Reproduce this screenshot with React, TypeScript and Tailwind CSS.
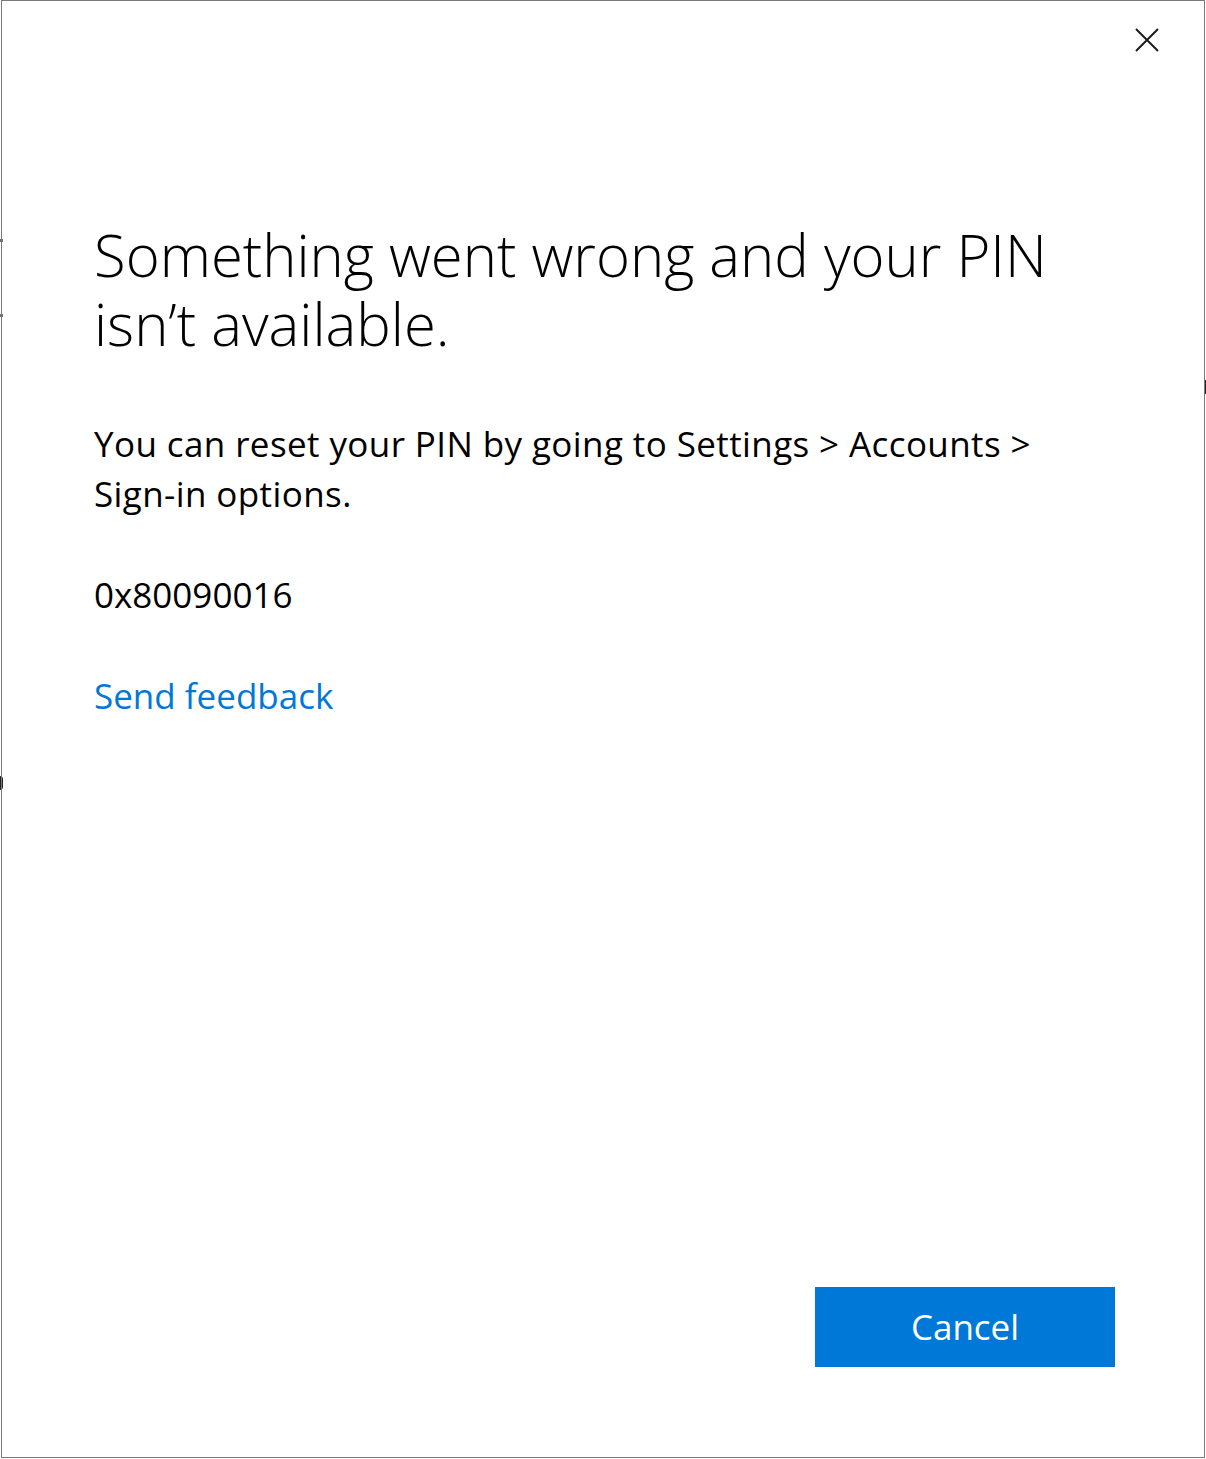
import React from "react";

const font = { fontFamily: '"Open Sans", "Noto Sans", sans-serif' };

const CloseIcon = () => (
  <svg width="24" height="24" viewBox="0 0 24 24" fill="none">
    <path d="M1 1L23 23M23 1L1 23" stroke="#1b1b1b" strokeWidth="2" />
  </svg>
);

export default function App() {
  return (
    <div className="relative w-[1206px] h-[1459px] bg-white overflow-hidden" style={font}>
      {/* bits of the window behind peeking out */}
      <div className="absolute left-0 top-[239px] w-[3px] h-[3px] bg-[#6d6d6d]" />
      <div className="absolute left-0 top-[314px] w-[3px] h-[3px] bg-[#6d6d6d]" />
      <div className="absolute left-[-4px] top-[776px] w-[7px] h-[14px] rounded-full bg-[#222]" />
      <div className="absolute right-0 top-[380px] w-[2px] h-[14px] bg-[#222]" />

      <div className="absolute inset-0 flex flex-col border border-[#7a7a7a] ml-[1px] mr-[1px] mb-[1px]">
        <div className="flex justify-end pt-[27px] pr-[45px]">
          <button className="w-[24px] h-[24px] flex items-center justify-center">
            <CloseIcon />
          </button>
        </div>

        <div className="flex flex-col pl-[92px] pr-[60px] pt-[168px]">
          <h1 className="max-w-[1000px] text-[58px] leading-[69px] font-light text-black">
            Something went wrong and your PIN isn’t available.
          </h1>
          <p className="mt-[61px] max-w-[960px] text-[35px] leading-[50px] tracking-[0.4px] text-black">
            You can reset your PIN by going to Settings &gt; Accounts &gt; Sign-in options.
          </p>
          <p className="mt-[51px] text-[35px] leading-[50px] text-black">0x80090016</p>
          <a href="#" className="mt-[51px] w-fit text-[35px] leading-[50px] text-[#0078d7]">
            Send feedback
          </a>
        </div>

        <div className="mt-auto flex justify-end pr-[89px] pb-[90px]">
          <button className="w-[300px] h-[80px] bg-[#0078d7] text-white text-[35px]">
            Cancel
          </button>
        </div>
      </div>
    </div>
  );
}
